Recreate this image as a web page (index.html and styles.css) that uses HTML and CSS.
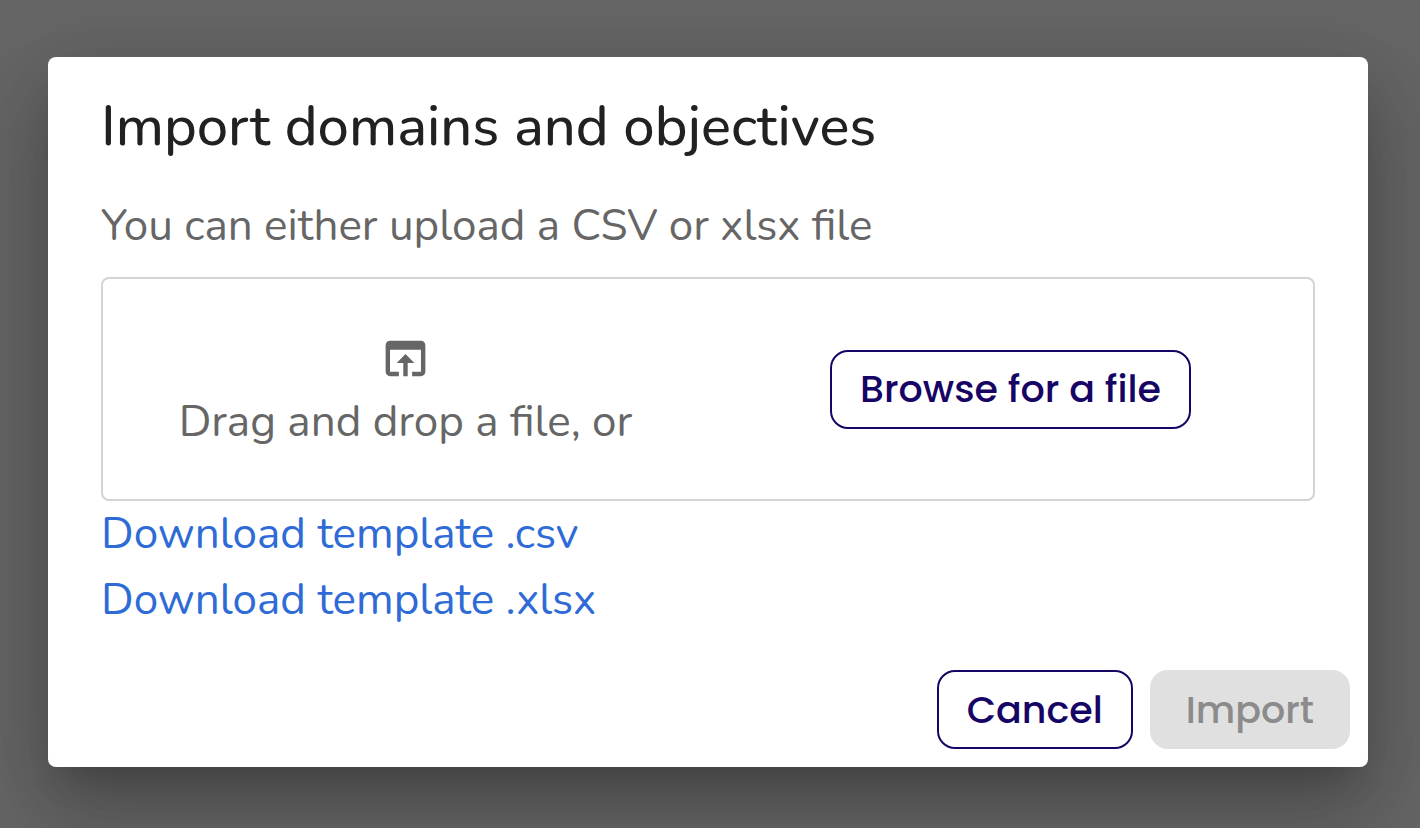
FILE: index.html
```html
<!DOCTYPE html>
<html lang="en">
<head>
    <meta charset="UTF-8">
    <meta name="viewport" content="width=device-width, initial-scale=1.0">
    <title>Import domains and objectives</title>
    <link rel="stylesheet" href="styles.css">
</head>
<body>
    <div class="modal" role="dialog" aria-labelledby="modal-title">
        <div class="modal-content">
            <h1 id="modal-title">Import domains and objectives</h1>
            <p class="subtitle">You can either upload a CSV or xlsx file</p>

            <div class="dropzone">
                <div class="drop-hint">
                    <svg class="upload-icon" viewBox="0 0 24 24" aria-hidden="true">
                        <path d="M19 4H5c-1.110 0-2 .9-2 2v12c0 1.100.89 2 2 2h4v-2H5V8h14v10h-4v2h4c1.100 0 2-.9 2-2V6c0-1.100-.89-2-2-2zm-7 6l-4 4h3v6h2v-6h3l-4-4z"/>
                    </svg>
                    <span>Drag and drop a file, or</span>
                </div>
                <div class="drop-browse">
                    <button type="button" class="btn btn-outline">Browse for a file</button>
                </div>
            </div>

            <div class="templates">
                <a href="#csv">Download template .csv</a>
                <a href="#xlsx">Download template .xlsx</a>
            </div>
        </div>

        <div class="modal-actions">
            <button type="button" class="btn btn-outline">Cancel</button>
            <button type="button" class="btn btn-import" disabled>Import</button>
        </div>
    </div>
</body>
</html>
```
FILE: styles.css
```css
* {
    box-sizing: border-box;
}
body {
    margin: 0;
    padding: 57px 52px 61px 48px;
    min-height: 100vh;
    background: #666;
    font-family: Nunito, Lato, sans-serif;
    font-size: 44px;
    line-height: 66px;
    color: #666;
}
.modal {
    background: #fff;
    border-radius: 8px;
    box-shadow: 0 24px 33px -15px rgba(0,0,0,0.2),
        0 53px 84px 7px rgba(0,0,0,0.14),
        0 20px 101px 18px rgba(0,0,0,0.12);
}
.modal-content {
    padding: 35px 53px 37px;
}
h1 {
    margin: 0;
    font-size: 56px;
    font-weight: 500;
    line-height: 70px;
    color: #212121;
}
.subtitle {
    margin: 31px 0 18px;
}
.dropzone {
    display: grid;
    grid-template-columns: 1fr 1fr;
    align-items: center;
    min-height: 224px;
    border: 2px solid #d2d4d8;
    border-radius: 8px;
}
.drop-hint {
    display: flex;
    flex-direction: column;
    align-items: center;
    gap: 4px;
    padding-top: 8px;
}
.drop-browse {
    display: flex;
    justify-content: center;
}
.upload-icon {
    width: 53px;
    height: 53px;
    fill: #666;
}
.templates {
    display: flex;
    flex-direction: column;
    align-items: flex-start;
}
.templates a {
    color: #2e6bd6;
    text-decoration: none;
}
.modal-actions {
    display: flex;
    justify-content: flex-end;
    gap: 17px;
    padding: 0 18px 18px;
}
.btn {
    height: 79px;
    padding: 0 28px;
    border: 2px solid transparent;
    border-radius: 18px;
    font-family: Poppins, Inter, sans-serif;
    font-size: 38px;
    font-weight: 500;
    line-height: 66px;
    cursor: pointer;
}
.btn-outline {
    background: #fff;
    border-color: #170565;
    color: #170565;
}
.btn-import {
    padding: 0 34px;
    background: #e0e0e0;
    color: #8b8b8b;
    cursor: default;
}
```
